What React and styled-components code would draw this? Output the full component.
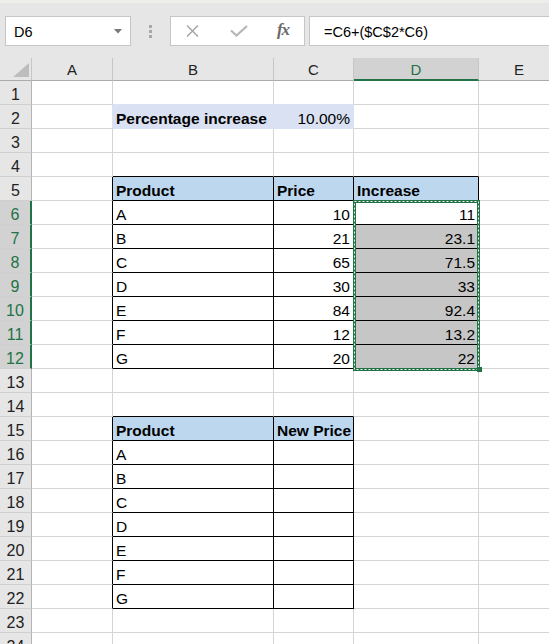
import React from 'react';
import styled, { createGlobalStyle } from 'styled-components';

const GREEN = '#217346';
const GRID = '#d4d4d4';
const HEAD_FILL = '#bdd7ee';
const SOFT_FILL = '#d9e1f2';
const SEL_FILL = '#c6c6c6';

const GlobalStyle = createGlobalStyle`
  html, body {
    margin: 0;
    padding: 0;
    background: #fff;
    overflow: hidden;
  }
  body {
    font-family: "Liberation Sans", Arial, sans-serif;
    color: #000;
  }
`;

const Window = styled.div`
  width: 549px;
  height: 644px;
  overflow: hidden;
  display: flex;
  flex-direction: column;
`;

const TopStrip = styled.div`
  height: 3px;
  flex-shrink: 0;
  background: #efedea;
`;

const Toolbar = styled.div`
  height: 55px;
  flex-shrink: 0;
  box-sizing: border-box;
  background: #e6e6e6;
  display: flex;
  align-items: flex-start;
  padding: 13px 0 0 5px;
`;

const NameBox = styled.div`
  width: 126px;
  height: 30px;
  box-sizing: border-box;
  border: 1px solid #c6c6c6;
  background: #fff;
  display: flex;
  justify-content: space-between;
  padding: 3px 8px 0 8px;
  font-size: 14.5px;
  line-height: 25px;
  svg {
    align-self: center;
    margin-top: -2px;
  }
`;

const Grip = styled.div`
  display: flex;
  flex-direction: column;
  gap: 2px;
  margin: 9px 18px 0 18px;
  span {
    width: 3px;
    height: 3px;
    background: #a8a8a8;
  }
`;

const FxBox = styled.div`
  width: 135px;
  height: 30px;
  box-sizing: border-box;
  border: 1px solid #c6c6c6;
  background: #fff;
  display: grid;
  grid-template-columns: 42px 52px 36px;
  align-items: center;
  justify-items: center;
`;

const FxLabel = styled.span`
  font-family: "Liberation Serif", "Times New Roman", serif;
  font-style: italic;
  font-weight: bold;
  font-size: 17px;
  color: #6a6a6a;
  letter-spacing: -1px;
  margin-top: -2px;
`;

const FormulaInput = styled.div`
  flex: 1;
  height: 30px;
  box-sizing: border-box;
  margin: 0 -2px 0 4px;
  border: 1px solid #c6c6c6;
  background: #fff;
  padding: 3px 0 0 14px;
  font-size: 14.5px;
  line-height: 25px;
`;

const Sheet = styled.div`
  flex-shrink: 0;
  display: grid;
  grid-template-columns: 32px 81px 161px 80px 125px 81px;
  grid-template-rows: 23px repeat(24, 24px);
`;

const Corner = styled.div`
  grid-row: 1;
  grid-column: 1;
  position: relative;
  background: #e6e6e6;
  border-right: 1px solid #c6c6c6;
  border-bottom: 1px solid #ababab;
  &::after {
    content: '';
    position: absolute;
    right: 2px;
    bottom: 3px;
    width: 0;
    height: 0;
    border-left: 16px solid transparent;
    border-bottom: 14px solid #bdbdbd;
  }
`;

const ColHeader = styled.div`
  grid-row: 1;
  grid-column: ${({ $col }) => $col};
  background: ${({ $active }) => ($active ? '#d2d2d2' : '#e6e6e6')};
  color: ${({ $active }) => ($active ? GREEN : '#222')};
  border-right: 1px solid #c6c6c6;
  border-bottom: ${({ $active }) => ($active ? `2px solid ${GREEN}` : '1px solid #ababab')};
  padding-bottom: ${({ $active }) => ($active ? '0' : '1px')};
  display: flex;
  align-items: flex-end;
  justify-content: center;
  font-size: 15px;
  line-height: 18px;
`;

const RowHeader = styled.div`
  grid-row: ${({ $row }) => $row};
  grid-column: 1;
  background: ${({ $active }) => ($active ? '#d2d2d2' : '#e6e6e6')};
  color: ${({ $active }) => ($active ? GREEN : '#222')};
  border-right: ${({ $active }) => ($active ? `2px solid ${GREEN}` : '1px solid #b4b4b4')};
  border-bottom: 1px solid #cfcfcf;
  display: flex;
  align-items: flex-end;
  justify-content: center;
  font-size: 16px;
  line-height: 18px;
`;

const Cell = styled.div`
  grid-row: ${({ $row }) => $row};
  grid-column: ${({ $col }) => $col};
  background: ${({ $fill }) => $fill || '#fff'};
  border-right: 1px solid ${({ $right }) => $right};
  border-bottom: 1px solid ${({ $bottom }) => $bottom};
  display: flex;
  align-items: flex-end;
  justify-content: ${({ $num }) => ($num ? 'flex-end' : 'flex-start')};
  padding: 0 3px;
  font-size: 15.5px;
  line-height: 18px;
  font-weight: ${({ $bold }) => ($bold ? 'bold' : 'normal')};
  white-space: nowrap;
`;

const Marquee = styled.div`
  grid-column: 5;
  grid-row: 7 / 14;
  margin: -1px -1px -2px -1px;
  position: relative;
  z-index: 1;
  pointer-events: none;
  svg {
    display: block;
    overflow: visible;
  }
`;

const COLS = ['A', 'B', 'C', 'D', 'E'];
const ROWS = 24;

const products = ['A', 'B', 'C', 'D', 'E', 'F', 'G'];
const prices = [10, 21, 65, 30, 84, 12, 20];
const increases = [11, 23.1, 71.5, 33, 92.4, 13.2, 22];

const cells = {
  B2: { v: 'Percentage increase', bold: true, fill: SOFT_FILL },
  C2: { v: '10.00%', num: true, fill: SOFT_FILL },
  B5: { v: 'Product', bold: true, fill: HEAD_FILL },
  C5: { v: 'Price', bold: true, fill: HEAD_FILL },
  D5: { v: 'Increase', bold: true, fill: HEAD_FILL },
  B15: { v: 'Product', bold: true, fill: HEAD_FILL },
  C15: { v: 'New Price', bold: true, fill: HEAD_FILL },
};
products.forEach((p, i) => {
  cells[`B${6 + i}`] = { v: p };
  cells[`C${6 + i}`] = { v: String(prices[i]), num: true };
  cells[`D${6 + i}`] = { v: String(increases[i]), num: true, fill: i > 0 ? SEL_FILL : null };
  cells[`B${16 + i}`] = { v: p };
});

const tables = [
  { c1: 1, c2: 3, r1: 5, r2: 12 },
  { c1: 1, c2: 2, r1: 15, r2: 22 },
];

const inTable = (c, r) => tables.some((t) => c >= t.c1 && c <= t.c2 && r >= t.r1 && r <= t.r2);
const fillOf = (c, r) => (cells[`${COLS[c]}${r}`] || {}).fill;

// gridline colour between a cell and its neighbour: table border, then fill, then plain grid
const edge = (c, r, nc, nr) => {
  if (inTable(c, r) || inTable(nc, nr)) return '#000';
  const own = fillOf(c, r);
  if (own && own !== SEL_FILL) return own;
  const next = fillOf(nc, nr);
  if (next && next !== SEL_FILL) return next;
  return GRID;
};

const XIcon = () => (
  <svg width="13" height="12" viewBox="0 0 13 12">
    <path d="M1 0.5 L12 11.5 M12 0.5 L1 11.5" stroke="#a3a3a3" strokeWidth="1.4" fill="none" />
  </svg>
);

const CheckIcon = () => (
  <svg width="18" height="12" viewBox="0 0 18 12">
    <path d="M1 5.5 L6.5 10.5 L17 1" stroke="#b6b6b6" strokeWidth="2.2" fill="none" />
  </svg>
);

const Caret = () => (
  <svg width="8" height="5" viewBox="0 0 8 5">
    <path d="M0 0 H8 L4 4.5 Z" fill="#777" />
  </svg>
);

// copy marquee around D6:D12: solid green band with white dashes through its middle
const Ants = ({ w, h }) => (
  <svg width={w} height={h} viewBox={`0 0 ${w} ${h}`}>
    <rect x="1.5" y="1.5" width={w - 3} height={h - 3} fill="none" stroke={GREEN} strokeWidth="3" />
    <rect x="1.5" y="1.5" width={w - 3} height={h - 3} fill="none" stroke="#fff" strokeWidth="1" strokeDasharray="2 2" />
    <rect x={w - 3} y={h - 4} width="5" height="5" fill={GREEN} />
  </svg>
);

export default function App() {
  const body = [];
  for (let r = 1; r <= ROWS; r++) {
    const rowActive = r >= 6 && r <= 12;
    body.push(
      <RowHeader key={`h${r}`} $row={r + 1} $active={rowActive}>
        {r}
      </RowHeader>
    );
    COLS.forEach((name, c) => {
      const cell = cells[`${name}${r}`] || {};
      body.push(
        <Cell
          key={`${name}${r}`}
          $row={r + 1}
          $col={c + 2}
          $fill={cell.fill}
          $num={cell.num}
          $bold={cell.bold}
          $right={edge(c, r, c + 1, r)}
          $bottom={edge(c, r, c, r + 1)}
        >
          {cell.v}
        </Cell>
      );
    });
  }

  return (
    <Window>
      <GlobalStyle />
      <TopStrip />
      <Toolbar>
        <NameBox>
          <span>D6</span>
          <Caret />
        </NameBox>
        <Grip>
          <span />
          <span />
          <span />
        </Grip>
        <FxBox>
          <XIcon />
          <CheckIcon />
          <FxLabel>fx</FxLabel>
        </FxBox>
        <FormulaInput>=C6+($C$2*C6)</FormulaInput>
      </Toolbar>
      <Sheet>
        <Corner />
        {COLS.map((name, c) => (
          <ColHeader key={name} $col={c + 2} $active={name === 'D'}>
            {name}
          </ColHeader>
        ))}
        {body}
        <Marquee>
          <Ants w={127} h={171} />
        </Marquee>
      </Sheet>
    </Window>
  );
}
